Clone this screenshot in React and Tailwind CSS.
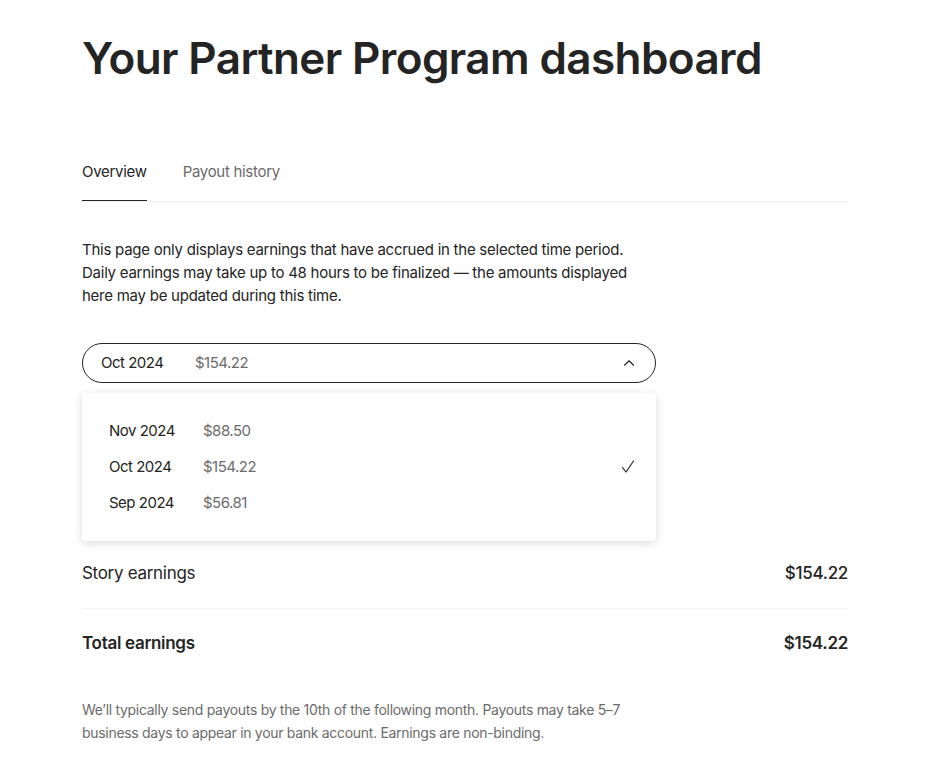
import React, { useState } from 'react';
import { ChevronUp } from 'lucide-react';

const months = [
  { label: 'Nov 2024', amount: '$88.50' },
  { label: 'Oct 2024', amount: '$154.22' },
  { label: 'Sep 2024', amount: '$56.81' },
];

const Tick = () => (
  <svg width="16" height="16" viewBox="0 0 16 16" fill="none" className="ml-auto">
    <path d="M2.5 8.5l3.5 4.5L13.5 2" stroke="#242424" strokeWidth="1.2" strokeLinecap="round" strokeLinejoin="round" />
  </svg>
);

const App = () => {
  const [tab, setTab] = useState('overview');
  const [open, setOpen] = useState(true);
  const [selected, setSelected] = useState(1);
  const current = months[selected];

  return (
    <div className="min-h-screen bg-white text-[#242424] font-['Inter','Liberation_Sans',sans-serif]">
      <div className="w-[766px] ml-[82px] pt-[29px]">
        <h1 className="text-[44px] leading-[58px] font-semibold tracking-[-0.6px]">
          Your Partner Program dashboard
        </h1>

        {/* Tabs */}
        <div className="mt-[75px] flex gap-9 border-b border-[#f2f2f2]">
          <button
            onClick={() => setTab('overview')}
            className={`pb-[18px] text-[15px] leading-5 tracking-[-0.3px] border-b ${tab === 'overview' ? 'border-[#242424] text-[#242424]' : 'border-transparent text-[#6b6b6b]'}`}
          >
            Overview
          </button>
          <button
            onClick={() => setTab('payouts')}
            className={`pb-[18px] text-[15px] leading-5 tracking-[-0.3px] border-b ${tab === 'payouts' ? 'border-[#242424] text-[#242424]' : 'border-transparent text-[#6b6b6b]'}`}
          >
            Payout history
          </button>
        </div>

        <p className="mt-[36px] w-[570px] text-[15px] leading-[23px] tracking-[-0.25px]">
          This page only displays earnings that have accrued in the selected time period. Daily earnings may take up to 48 hours to be finalized — the amounts displayed here may be updated during this time.
        </p>

        {/* Month picker */}
        <div className="relative mt-[36px] w-[574px]">
          <button
            onClick={() => setOpen(!open)}
            className="w-full h-10 rounded-full border border-[#242424] flex items-center pl-[18px] pr-[17px] text-[15px]"
          >
            <span className="w-[94px] text-left tracking-[-0.5px]">{current.label}</span>
            <span className="text-[#6b6b6b] tracking-[-0.5px]">{current.amount}</span>
            <ChevronUp size={18} strokeWidth={1.5} className={`ml-auto ${open ? '' : 'rotate-180'}`} />
          </button>

          {open && (
            <div className="absolute left-0 top-[50px] w-full bg-white rounded shadow-[0_2px_10px_rgba(0,0,0,0.15)] py-[20px] pr-[20px] z-10">
              {months.map((m, i) => (
                <button
                  key={m.label}
                  onClick={() => { setSelected(i); setOpen(false); }}
                  className="w-full h-9 flex items-center pl-[27px] text-[15px]"
                >
                  <span className="w-[94px] text-left tracking-[-0.5px]">{m.label}</span>
                  <span className="text-[#6b6b6b] tracking-[-0.5px]">{m.amount}</span>
                  {i === selected && <Tick />}
                </button>
              ))}
            </div>
          )}
        </div>

        {/* Earnings summary */}
        <div className="mt-[156px]">
          <div className="flex justify-between items-center h-[70px] border-b border-[#f2f2f2] text-[17px] tracking-[-0.3px]">
            <span>Story earnings</span>
            <span className="font-medium">$154.22</span>
          </div>
          <div className="flex justify-between items-center h-[70px] text-[17px] font-semibold tracking-[-0.3px]">
            <span>Total earnings</span>
            <span>$154.22</span>
          </div>
        </div>

        <p className="mt-[19px] w-[570px] text-[14px] leading-[23px] tracking-[-0.3px] text-[#6b6b6b]">
          We’ll typically send payouts by the 10th of the following month. Payouts may take 5–7 business days to appear in your bank account. Earnings are non-binding.
        </p>
      </div>
    </div>
  );
};

export default App;
